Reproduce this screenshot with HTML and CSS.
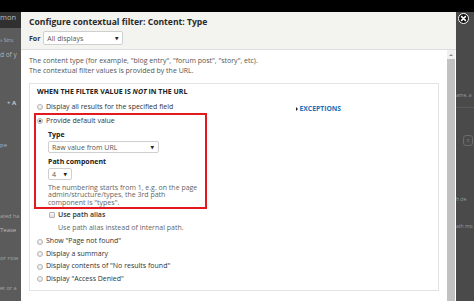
FILE: index.html
```html
<!DOCTYPE html>
<html lang="en">
<head>
<meta charset="utf-8">
<title>Configure contextual filter</title>
<link rel="stylesheet" href="styles.css">
</head>
<body>
<div class="topbar"></div>
<div class="stage">
  <aside class="bg-left">
    <div class="bl-band">mon</div>
    <div class="bl bl1">» Stru</div>
    <div class="bl bl2">d of y</div>
    <div class="bl bl3"><span class="bl-btn">+ A</span></div>
    <div class="bl bl4">pe</div>
    <div class="bl bl5">ated ha</div>
    <div class="bl bl6">Tease</div>
    <div class="bl bl7">or row</div>
    <div class="bl bl8">et or a</div>
  </aside>

  <div class="dialog">
    <header class="dlg-head">
      <h1 class="dlg-title">Configure contextual filter: Content: Type</h1>
      <div class="for-row">
        <span class="for-label">For</span>
        <div class="select sel-for"><span>All displays</span><span class="arrow">▼</span></div>
      </div>
    </header>
    <div class="dlg-body">
      <div class="dlg-main">
        <p class="intro">The content type (for example, "blog entry", "forum post", "story", etc).<br>The contextual filter values is provided by the URL.</p>
        <div class="fieldset">
          <div class="legend">When the filter value is <em>not</em> in the URL</div>
          <div class="fs-row">
            <div class="fs-left">
              <div class="opt"><span class="radio"></span>Display all results for the specified field</div>
              <div class="highlight">
                <div class="opt opt-in"><span class="radio checked"></span>Provide default value</div>
                <div class="sub">
                  <div class="flabel">Type</div>
                  <div class="select sel-type"><span>Raw value from URL</span><span class="arrow">▼</span></div>
                  <div class="flabel flabel2">Path component</div>
                  <div class="select sel-num"><span>4</span><span class="arrow">▼</span></div>
                  <p class="fdesc">The numbering starts from 1, e.g. on the page<br>admin/structure/types, the 3rd path<br>component is "types".</p>
                </div>
              </div>
              <div class="check-row"><span class="checkbox"></span>Use path alias</div>
              <p class="check-desc">Use path alias instead of internal path.</p>
              <div class="radios">
                <div class="opt"><span class="radio"></span>Show "Page not found"</div>
                <div class="opt"><span class="radio"></span>Display a summary</div>
                <div class="opt"><span class="radio"></span>Display contents of "No results found"</div>
                <div class="opt"><span class="radio"></span>Display "Access Denied"</div>
              </div>
            </div>
            <div class="fs-right">
              <a class="exceptions" href="#"><span class="tri"></span>Exceptions</a>
            </div>
          </div>
        </div>
      </div>
      <div class="scrollbar">
        <div class="sb-arrow"><span class="sb-up"></span></div>
        <div class="sb-thumb"></div>
      </div>
    </div>
  </div>

  <aside class="bg-right">
    <div class="br br1">ame, a</div>
    <div class="br-line"></div>
    <div class="br br2"><span class="br-btn">c</span></div>
    <div class="br br3">h de</div>
    <div class="br br4">ath mo</div>
  </aside>

  <button class="close" type="button" aria-label="Close">
    <svg width="11" height="11" viewBox="0 0 11 11">
      <circle cx="5.5" cy="5.5" r="5" fill="#111" stroke="#fff" stroke-width="1"/>
      <path d="M3.6 3.6 L7.4 7.4 M7.4 3.6 L3.6 7.4" stroke="#fff" stroke-width="1.5" stroke-linecap="round"/>
    </svg>
  </button>
</div>
</body>
</html>
```
FILE: styles.css
```css
* { box-sizing: border-box; }

html, body {
  margin: 0;
  padding: 0;
}

body {
  width: 474px;
  height: 301px;
  overflow: hidden;
  background: #4b4b4b;
  font-family: "Open Sans", "DejaVu Sans", sans-serif;
  color: #333;
}

.topbar {
  height: 12px;
  background: #000;
}

.stage {
  position: relative;
  display: flex;
  height: 289px;
}

/* ---------- dimmed page behind (left) ---------- */
.bg-left {
  width: 21px;
  flex: none;
  background: #5b5b5b;
  overflow: hidden;
  white-space: nowrap;
  color: #a9a9a9;
  font-size: 6px;
  line-height: 10px;
}

.bl-band {
  height: 16px;
  background: #303030;
  color: #bdbdbd;
  font-size: 7.5px;
  line-height: 10px;
}

.bl1 { margin-top: 7px; font-size: 5px; color: #aab3bd; }
.bl2 { margin-top: 5px; font-size: 6.5px; color: #b5b5b5; }
.bl3 { margin-top: 38px; padding-left: 7px; }
.bl-btn { color: #c8c8c8; font-weight: 700; }
.bl4 { margin-top: 32px; color: #9fb1c4; }
.bl5 { margin-top: 61px; font-size: 5.5px; }
.bl6 { margin-top: 4px; color: #b8b8b8; }
.bl7 { margin-top: 18px; }
.bl8 { margin-top: 20px; font-size: 5.5px; }

/* ---------- dimmed page behind (right) ---------- */
.bg-right {
  flex: 1;
  background: #4a4a4a;
  overflow: hidden;
  white-space: nowrap;
  color: #9c9c9c;
  font-size: 5px;
  line-height: 10px;
}

.br1 { margin-top: 78px; }
.br-line { height: 1px; background: #5a5a5a; margin-top: 7px; }
.br2 { margin-top: 27px; padding-left: 7px; }
.br-btn {
  display: inline-block;
  border: 1px solid #6a6a6a;
  border-radius: 3px;
  padding: 0 3px;
  line-height: 9px;
}
.br3 { margin-top: 48px; }
.br4 { margin-top: 17px; }

/* ---------- dialog ---------- */
.dialog {
  width: 435px;
  flex: none;
  display: flex;
  flex-direction: column;
  background: #fff;
}

.dlg-head {
  height: 38px;
  background: #f3f3ef;
  border-bottom: 1px solid #dedede;
  padding: 4px 8px 0 8px;
}

.dlg-title {
  margin: 0;
  font-size: 8.6px;
  line-height: 12px;
  font-weight: 700;
  color: #2a2a2a;
}

.for-row {
  margin-top: 3px;
  display: flex;
  align-items: center;
  gap: 3px;
}

.for-label {
  font-size: 7px;
  font-weight: 700;
  color: #333;
}

.select {
  display: flex;
  align-items: center;
  justify-content: space-between;
  background: #fff;
  border: 1px solid #cfcfcf;
  border-radius: 2px;
  font-size: 7px;
  color: #555;
  padding: 0 4px 0 3px;
}

.arrow {
  font-size: 4.5px;
  color: #222;
}

.sel-for { width: 80px; height: 14px; }
.sel-type { width: 111px; height: 12px; margin-top: 1px; }
.sel-num { width: 24px; height: 12px; margin-top: 1px; }

.dlg-body {
  flex: 1;
  display: flex;
  min-height: 0;
}

.dlg-main {
  flex: 1;
  padding: 6px 8px 0 8px;
}

.intro {
  margin: 0;
  font-size: 7px;
  line-height: 10px;
  color: #555;
}

.fieldset {
  margin-top: 7px;
  border: 1px solid #e3e3e3;
  padding: 3px 4px 5px 4px;
}

.legend {
  padding-left: 3px;
  font-size: 7px;
  line-height: 10px;
  font-weight: 700;
  text-transform: uppercase;
  color: #222;
}

.fs-row {
  display: flex;
}

.fs-left {
  width: 262px;
  flex: none;
}

.fs-right {
  padding-top: 7px;
}

.opt {
  display: flex;
  align-items: center;
  font-size: 7px;
  line-height: 10px;
  color: #333;
}

.fs-left > .opt {
  margin-top: 5px;
  margin-left: 3px;
}

.radio {
  width: 6px;
  height: 6px;
  flex: none;
  border-radius: 50%;
  border: 1px solid #b5b5b5;
  background: radial-gradient(circle at 50% 40%, #fafafa, #dcdcdc);
  margin-right: 3px;
}

.radio.checked {
  background: radial-gradient(circle, #555 0 1.3px, #e8e8e8 1.6px);
}

.highlight {
  margin-top: 1px;
  width: 173px;
  border: 2px solid #e3191f;
  padding: 1px 0 1px 1px;
}

.sub {
  padding-left: 11px;
}

.flabel {
  margin-top: 4px;
  font-size: 7px;
  line-height: 10px;
  font-weight: 700;
  color: #222;
}

.fdesc {
  margin: 3.5px 0 0 0;
  font-size: 7px;
  line-height: 7.5px;
  color: #666;
  white-space: nowrap;
}

.check-row {
  display: flex;
  align-items: center;
  margin: 1px 0 0 15px;
  font-size: 7px;
  line-height: 10px;
  font-weight: 600;
  color: #333;
}

.checkbox {
  width: 6px;
  height: 6px;
  flex: none;
  border: 1px solid #b5b5b5;
  border-radius: 1px;
  background: linear-gradient(#fafafa, #dedede);
  margin-right: 3px;
}

.check-desc {
  margin: 3px 0 0 24px;
  font-size: 7px;
  line-height: 10px;
  color: #666;
}

.radios {
  margin: 2.25px 0 0 3px;
}

.radios .opt {
  line-height: 12.5px;
}

.exceptions {
  display: flex;
  align-items: center;
  font-size: 6.8px;
  line-height: 10px;
  font-weight: 700;
  text-transform: uppercase;
  color: #1a6fb8;
  text-decoration: none;
}

.tri {
  width: 0;
  height: 0;
  border-top: 2px solid transparent;
  border-bottom: 2px solid transparent;
  border-left: 2.5px solid #222;
  margin-right: 1.5px;
}

/* ---------- scrollbar ---------- */
.scrollbar {
  width: 8px;
  flex: none;
  margin-right: 1px;
  display: flex;
  flex-direction: column;
  background: #f0f0f0;
}

.sb-arrow {
  height: 9px;
  display: flex;
  align-items: center;
  justify-content: center;
}

.sb-up {
  width: 0;
  height: 0;
  border-left: 2px solid transparent;
  border-right: 2px solid transparent;
  border-bottom: 2px solid #8a8a8a;
}

.sb-thumb {
  flex: 1;
  background: #c1c1c1;
}

/* ---------- close button ---------- */
.close {
  position: absolute;
  left: 458px;
  top: 1px;
  width: 11px;
  height: 11px;
  padding: 0;
  border: 0;
  background: none;
  display: block;
}

.close svg { display: block; }
```
